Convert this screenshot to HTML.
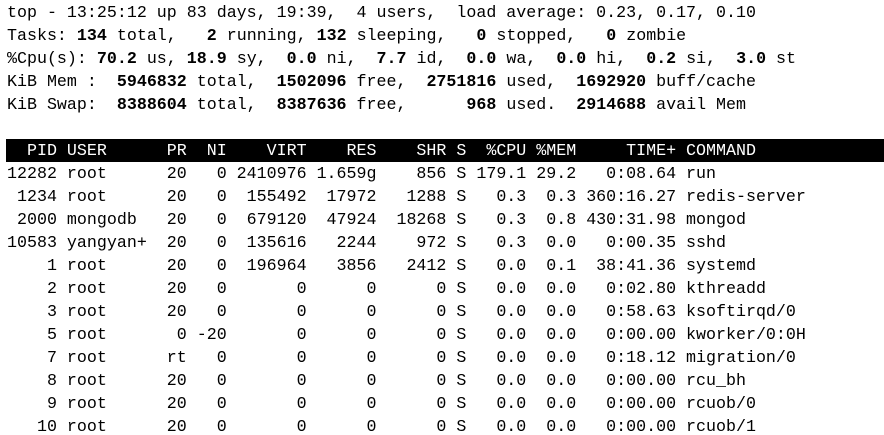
<!DOCTYPE html>
<html><head><meta charset="utf-8"><style>
html,body{margin:0;padding:0;background:#fff;width:884px;height:435px;overflow:hidden}
pre{margin:0;padding:1px 0 0 7px;font-family:"Liberation Mono",monospace;font-size:16.65px;line-height:23px;color:#000}
b{font-weight:bold}
.h{display:block;background:#000;color:#fff;margin-left:-1px;padding-left:1px;width:880px}
</style></head><body><pre>top - 13:25:12 up 83 days, 19:39,  4 users,  load average: 0.23, 0.17, 0.10
Tasks: <b>134</b> total,   <b>2</b> running, <b>132</b> sleeping,   <b>0</b> stopped,   <b>0</b> zombie
%Cpu(s): <b>70.2</b> us, <b>18.9</b> sy,  <b>0.0</b> ni,  <b>7.7</b> id,  <b>0.0</b> wa,  <b>0.0</b> hi,  <b>0.2</b> si,  <b>3.0</b> st
KiB Mem :  <b>5946832</b> total,  <b>1502096</b> free,  <b>2751816</b> used,  <b>1692920</b> buff/cache
KiB Swap:  <b>8388604</b> total,  <b>8387636</b> free,      <b>968</b> used.  <b>2914688</b> avail Mem

<span class="h">  PID USER      PR  NI    VIRT    RES    SHR S  %CPU %MEM     TIME+ COMMAND</span>12282 root      20   0 2410976 1.659g    856 S 179.1 29.2   0:08.64 run
 1234 root      20   0  155492  17972   1288 S   0.3  0.3 360:16.27 redis-server
 2000 mongodb   20   0  679120  47924  18268 S   0.3  0.8 430:31.98 mongod
10583 yangyan+  20   0  135616   2244    972 S   0.3  0.0   0:00.35 sshd
    1 root      20   0  196964   3856   2412 S   0.0  0.1  38:41.36 systemd
    2 root      20   0       0      0      0 S   0.0  0.0   0:02.80 kthreadd
    3 root      20   0       0      0      0 S   0.0  0.0   0:58.63 ksoftirqd/0
    5 root       0 -20       0      0      0 S   0.0  0.0   0:00.00 kworker/0:0H
    7 root      rt   0       0      0      0 S   0.0  0.0   0:18.12 migration/0
    8 root      20   0       0      0      0 S   0.0  0.0   0:00.00 rcu_bh
    9 root      20   0       0      0      0 S   0.0  0.0   0:00.00 rcuob/0
   10 root      20   0       0      0      0 S   0.0  0.0   0:00.00 rcuob/1
</pre></body></html>
